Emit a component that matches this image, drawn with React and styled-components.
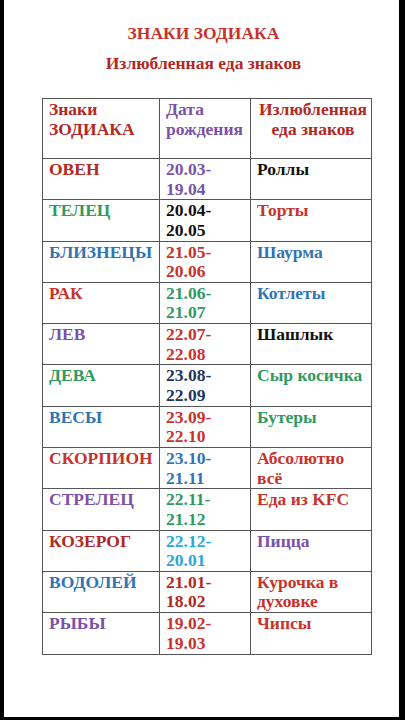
import React from "react"
import styled, { createGlobalStyle } from "styled-components"

const GlobalStyle = createGlobalStyle`
  body {
    margin: 0;
    background: #000;
  }
`

const C = {
  red: "#c8322b",
  dark: "#b3281f",
  purple: "#7a52a8",
  green: "#2f9a62",
  blue: "#2f74b5",
  navy: "#22355f",
  cyan: "#2ba7d9",
  black: "#111",
}

const Frame = styled.div`
  width: 395px;
  height: 717px;
  margin-left: 4px;
  background: #fff;
  font-family: "Liberation Serif", "Times New Roman", serif;
  font-weight: bold;
  padding-top: 23px;
  box-sizing: border-box;
`

const Title = styled.h1`
  margin: 0;
  text-align: center;
  font-size: 17.5px;
  line-height: 20px;
  color: ${C.red};
  padding-left: 4px;
`

const Subtitle = styled.h2`
  margin: 10px 0 0;
  text-align: center;
  font-size: 17.5px;
  line-height: 20px;
  color: ${C.dark};
  padding-left: 4px;
`

const Table = styled.table`
  margin: 25px 0 0 38px;
  width: 329px;
  border-collapse: collapse;
  table-layout: fixed;
  font-size: 17.5px;
  line-height: 19.5px;
`

const Cell = styled.td`
  border: 1.5px solid #555;
  padding: 1px 2px 0 6px;
  vertical-align: top;
  height: ${(p) => (p.$head ? 60 : 41.3)}px;
  box-sizing: border-box;
  color: ${(p) => p.$color};
  text-align: ${(p) => (p.$center ? "center" : "left")};
  white-space: nowrap;
  overflow: hidden;
`

const Line = styled.div``

const rows = [
  ["ОВЕН", "dark", ["20.03-", "19.04"], "purple", ["Роллы"], "black"],
  ["ТЕЛЕЦ", "green", ["20.04-", "20.05"], "black", ["Торты"], "red"],
  ["БЛИЗНЕЦЫ", "blue", ["21.05-", "20.06"], "red", ["Шаурма"], "blue"],
  ["РАК", "red", ["21.06-", "21.07"], "green", ["Котлеты"], "blue"],
  ["ЛЕВ", "purple", ["22.07-", "22.08"], "red", ["Шашлык"], "black"],
  ["ДЕВА", "green", ["23.08-", "22.09"], "navy", ["Сыр косичка"], "green"],
  ["ВЕСЫ", "blue", ["23.09-", "22.10"], "red", ["Бутеры"], "green"],
  ["СКОРПИОН", "red", ["23.10-", "21.11"], "blue", ["Абсолютно", "всё"], "red"],
  ["СТРЕЛЕЦ", "purple", ["22.11-", "21.12"], "green", ["Еда из KFC"], "red"],
  ["КОЗЕРОГ", "dark", ["22.12-", "20.01"], "cyan", ["Пицца"], "purple"],
  ["ВОДОЛЕЙ", "blue", ["21.01-", "18.02"], "dark", ["Курочка в", "духовке"], "red"],
  ["РЫБЫ", "purple", ["19.02-", "19.03"], "red", ["Чипсы"], "red"],
]

function Lines({ items }) {
  return items.map((t, i) => <Line key={i}>{t}</Line>)
}

export default function App() {
  return (
    <>
      <GlobalStyle />
      <Frame>
        <Title>ЗНАКИ ЗОДИАКА</Title>
        <Subtitle>Излюбленная еда знаков</Subtitle>
        <Table>
          <colgroup>
            <col style={{ width: 117 }} />
            <col style={{ width: 91 }} />
            <col style={{ width: 121 }} />
          </colgroup>
          <tbody>
            <tr>
              <Cell $head $color={C.dark}>
                <Lines items={["Знаки", "ЗОДИАКА"]} />
              </Cell>
              <Cell $head $color={C.purple}>
                <Lines items={["Дата", "рождения"]} />
              </Cell>
              <Cell $head $center $color={C.dark}>
                <Lines items={["Излюбленная", "еда знаков"]} />
              </Cell>
            </tr>
            {rows.map(([sign, sc, date, dc, food, fc]) => (
              <tr key={sign}>
                <Cell $color={C[sc]}>{sign}</Cell>
                <Cell $color={C[dc]}>
                  <Lines items={date} />
                </Cell>
                <Cell $color={C[fc]}>
                  <Lines items={food} />
                </Cell>
              </tr>
            ))}
          </tbody>
        </Table>
      </Frame>
    </>
  )
}
